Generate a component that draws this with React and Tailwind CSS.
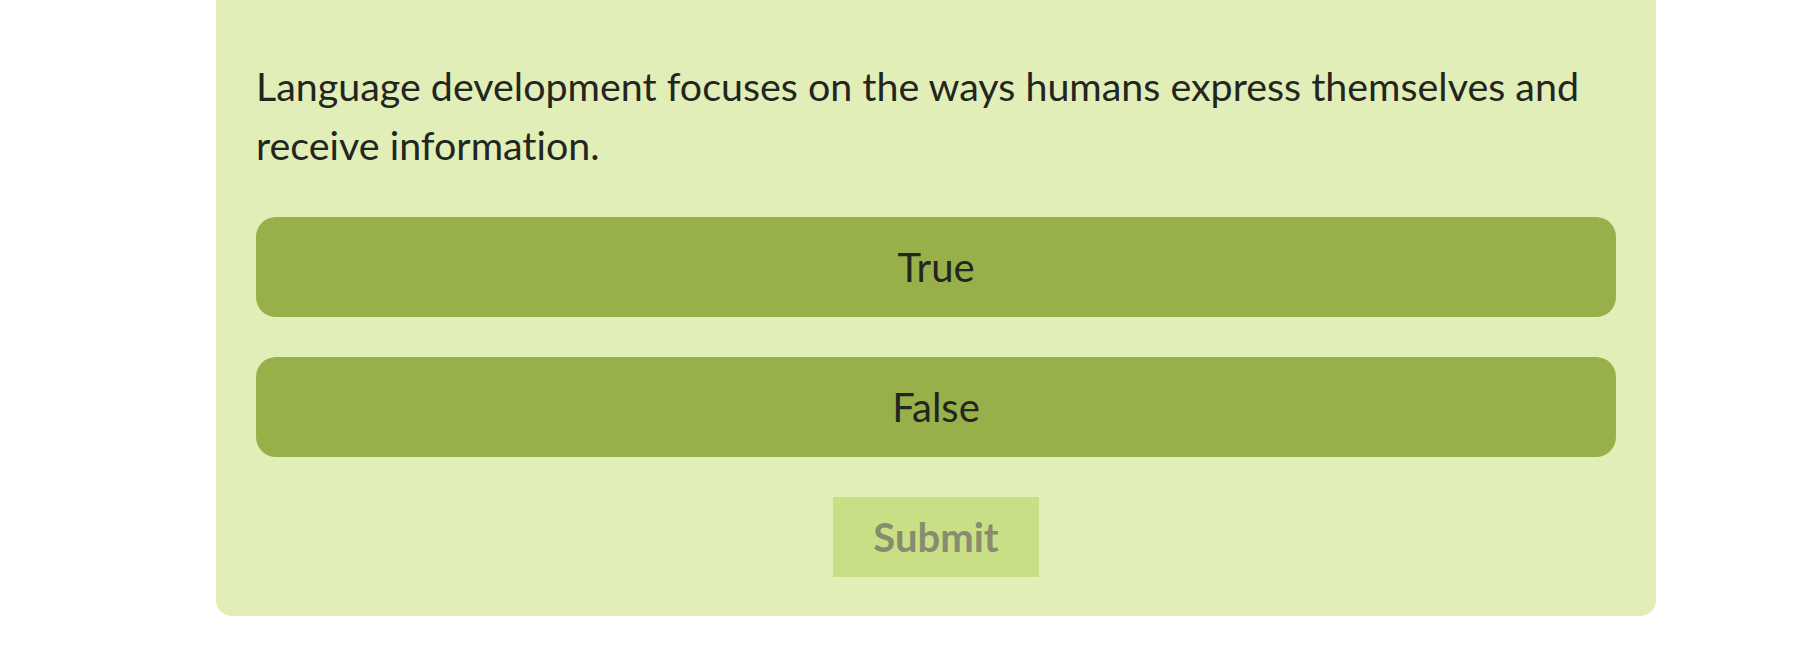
import React from "react";

export default function App() {
  const options = ["True", "False"];

  return (
    <div className="w-[1808px] h-[648px] bg-white" style={{ fontFamily: "Lato, 'Open Sans', sans-serif" }}>
      <div className="ml-[216px] w-[1440px] bg-[#e1eeb7] rounded-b-[16px] px-10 pt-[56px] pb-[39px] [font-variant-ligatures:none]">
        <p className="text-[39.4px] leading-[59px] text-[#232520]">
          Language development focuses on the ways humans express themselves and receive information.
        </p>

        <div className="mt-[43px] flex flex-col gap-10">
          {options.map((opt) => (
            <button
              key={opt}
              className="h-[100px] w-full rounded-[20px] bg-[#98b04a] text-[40px] text-[#232520] flex items-center justify-center"
            >
              {opt}
            </button>
          ))}
        </div>

        <div className="mt-10 flex justify-center">
          <button
            disabled
            className="h-20 px-10 bg-[#c9df86] text-[40px] font-bold text-[#878c6f]"
          >
            Submit
          </button>
        </div>
      </div>
    </div>
  );
}
